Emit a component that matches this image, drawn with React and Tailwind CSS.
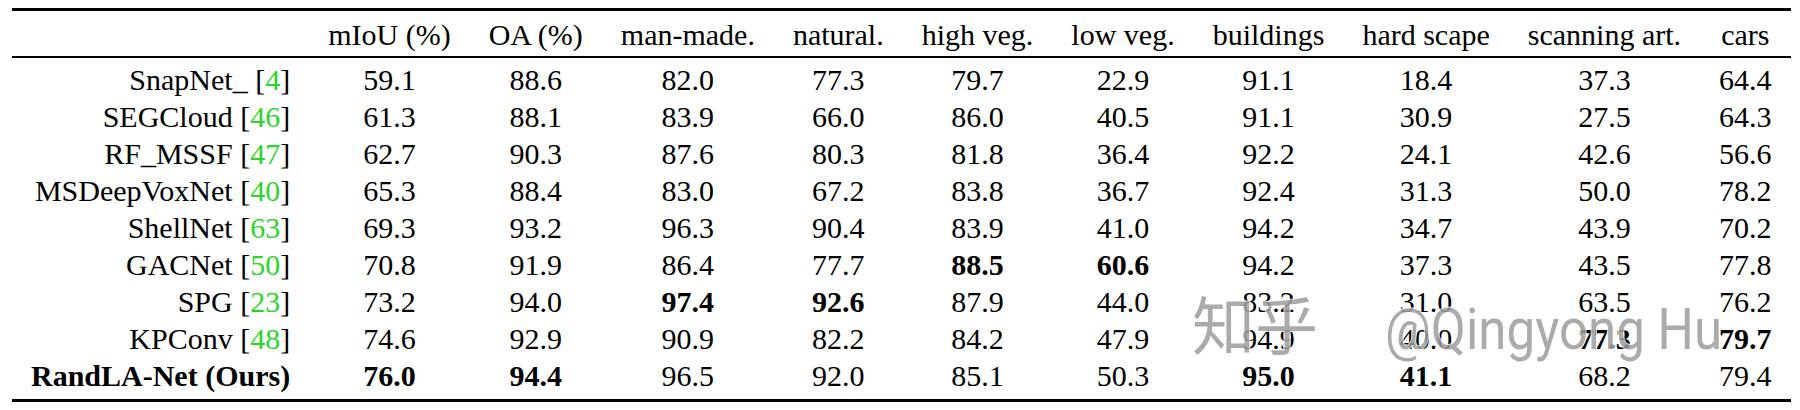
import React from "react";

const headers = [
  "mIoU (%)",
  "OA (%)",
  "man-made.",
  "natural.",
  "high veg.",
  "low veg.",
  "buildings",
  "hard scape",
  "scanning art.",
  "cars",
];

const rows = [
  { name: "SnapNet_", ref: "4", v: ["59.1", "88.6", "82.0", "77.3", "79.7", "22.9", "91.1", "18.4", "37.3", "64.4"], b: [] },
  { name: "SEGCloud", ref: "46", v: ["61.3", "88.1", "83.9", "66.0", "86.0", "40.5", "91.1", "30.9", "27.5", "64.3"], b: [] },
  { name: "RF_MSSF", ref: "47", v: ["62.7", "90.3", "87.6", "80.3", "81.8", "36.4", "92.2", "24.1", "42.6", "56.6"], b: [] },
  { name: "MSDeepVoxNet", ref: "40", v: ["65.3", "88.4", "83.0", "67.2", "83.8", "36.7", "92.4", "31.3", "50.0", "78.2"], b: [] },
  { name: "ShellNet", ref: "63", v: ["69.3", "93.2", "96.3", "90.4", "83.9", "41.0", "94.2", "34.7", "43.9", "70.2"], b: [] },
  { name: "GACNet", ref: "50", v: ["70.8", "91.9", "86.4", "77.7", "88.5", "60.6", "94.2", "37.3", "43.5", "77.8"], b: [4, 5] },
  { name: "SPG", ref: "23", v: ["73.2", "94.0", "97.4", "92.6", "87.9", "44.0", "83.2", "31.0", "63.5", "76.2"], b: [2, 3] },
  { name: "KPConv", ref: "48", v: ["74.6", "92.9", "90.9", "82.2", "84.2", "47.9", "94.9", "40.0", "77.3", "79.7"], b: [8, 9] },
  { name: "RandLA-Net (Ours)", ref: null, v: ["76.0", "94.4", "96.5", "92.0", "85.1", "50.3", "95.0", "41.1", "68.2", "79.4"], b: [0, 1, 6, 7] },
];

export default function App() {
  return (
    <div className="relative w-[1800px] h-[410px] bg-white pt-[8px] pl-[12px] text-black overflow-hidden font-['Liberation_Serif','Times_New_Roman',serif]">
      <table className="border-collapse text-[30px] leading-none font-['Liberation_Serif','Times_New_Roman',serif]">
        <thead>
          <tr className="border-t-[3px] border-b-[2px] border-black h-[47px]">
            <th className="px-[19px]"></th>
            {headers.map((h) => (
              <th key={h} className="px-[19px] font-normal whitespace-nowrap text-center pt-[4px]">
                {h}
              </th>
            ))}
          </tr>
        </thead>
        <tbody className="border-b-[3px] border-black">
          <tr className="h-[5px]">
            <td colSpan={11}></td>
          </tr>
          {rows.map((r) => (
            <tr key={r.name} className="h-[37px]">
              <td className="px-[19px] text-right whitespace-nowrap">
                {r.ref ? (
                  <>
                    {r.name} [<span className="text-[#2bd62b]">{r.ref}</span>]
                  </>
                ) : (
                  <span className="font-bold">{r.name}</span>
                )}
              </td>
              {r.v.map((x, i) => (
                <td
                  key={i}
                  className={
                    "px-[19px] text-center whitespace-nowrap " +
                    (r.b.includes(i) ? "font-bold" : "")
                  }
                >
                  {x}
                </td>
              ))}
            </tr>
          ))}
          <tr className="h-[6px]">
            <td colSpan={11}></td>
          </tr>
        </tbody>
      </table>
      <div
        className="absolute left-[1192px] top-[290px] flex items-baseline whitespace-nowrap text-[#9d9d9d] opacity-85 leading-none"
        style={{ WebkitTextStroke: "2px #ffffff", paintOrder: "stroke fill" }}
      >
        <span className="text-[63px] font-['Noto_Sans_CJK_SC',sans-serif]">知乎</span>
        <span className="ml-[67px] text-[58px] font-['Roboto',sans-serif] inline-block origin-left scale-x-[0.88]">
          @Qingyong Hu
        </span>
      </div>
    </div>
  );
}
